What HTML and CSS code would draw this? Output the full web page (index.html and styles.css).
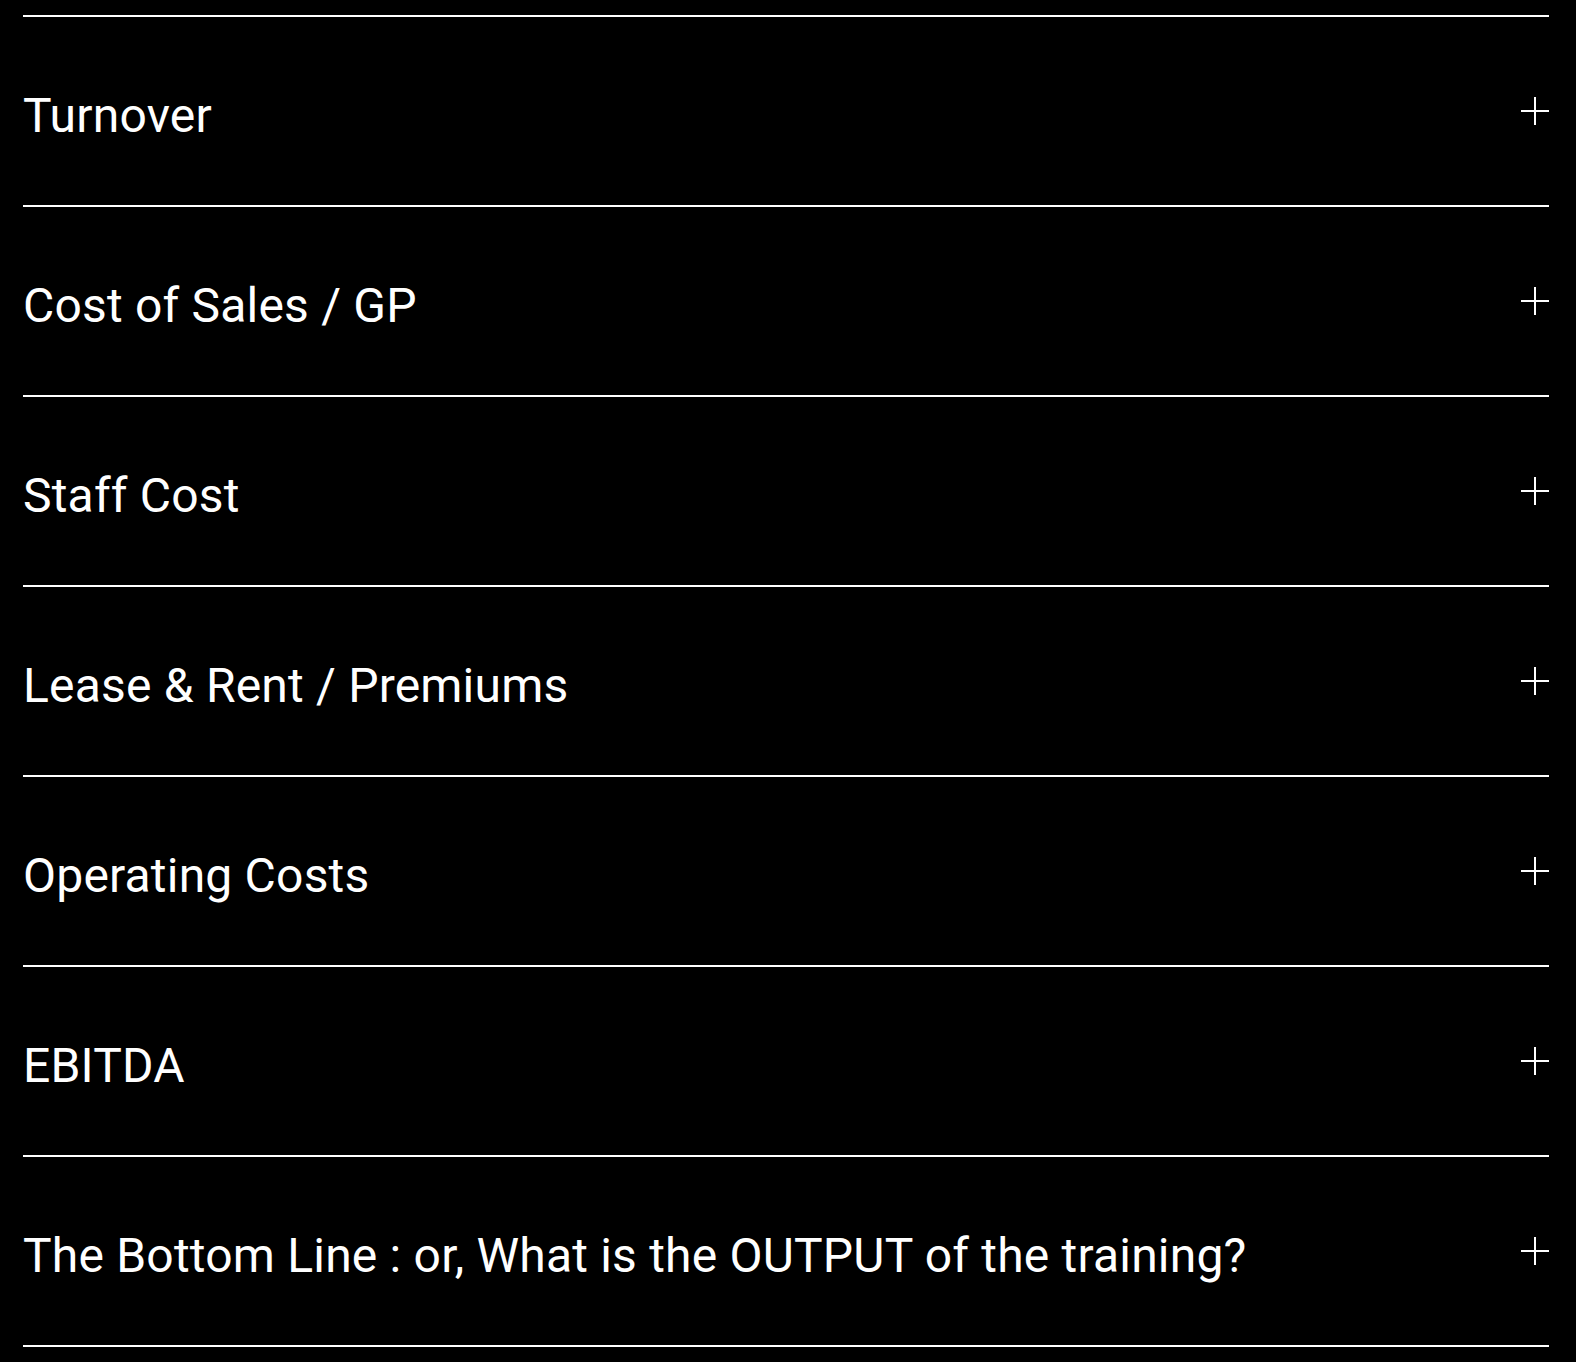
FILE: index.html
```html
<!DOCTYPE html>
<html lang="en">
<head>
<meta charset="utf-8">
<title>Accordion</title>
<link rel="stylesheet" href="styles.css">
</head>
<body>
<div class="accordion">
  <div class="item"><span class="label">Turnover</span><svg class="plus" width="28" height="28" viewBox="0 0 28 28"><path d="M0 14H28M14 0V28" stroke="#fff" stroke-width="2"/></svg></div>
  <div class="item"><span class="label">Cost of Sales / GP</span><svg class="plus" width="28" height="28" viewBox="0 0 28 28"><path d="M0 14H28M14 0V28" stroke="#fff" stroke-width="2"/></svg></div>
  <div class="item"><span class="label">Staff Cost</span><svg class="plus" width="28" height="28" viewBox="0 0 28 28"><path d="M0 14H28M14 0V28" stroke="#fff" stroke-width="2"/></svg></div>
  <div class="item"><span class="label">Lease &amp; Rent / Premiums</span><svg class="plus" width="28" height="28" viewBox="0 0 28 28"><path d="M0 14H28M14 0V28" stroke="#fff" stroke-width="2"/></svg></div>
  <div class="item"><span class="label">Operating Costs</span><svg class="plus" width="28" height="28" viewBox="0 0 28 28"><path d="M0 14H28M14 0V28" stroke="#fff" stroke-width="2"/></svg></div>
  <div class="item"><span class="label">EBITDA</span><svg class="plus" width="28" height="28" viewBox="0 0 28 28"><path d="M0 14H28M14 0V28" stroke="#fff" stroke-width="2"/></svg></div>
  <div class="item"><span class="label">The Bottom Line : or, What is the OUTPUT of the training?</span><svg class="plus" width="28" height="28" viewBox="0 0 28 28"><path d="M0 14H28M14 0V28" stroke="#fff" stroke-width="2"/></svg></div>
</div>
</body>
</html>
```

FILE: styles.css
```css
html, body {
  margin: 0;
  padding: 0;
  background: #000;
}
body {
  padding: 15px 27px 0 23px;
  color: #fff;
  font-family: Roboto, "Liberation Sans", sans-serif;
}
.accordion {
  border-bottom: 2px solid #fff;
}
.item {
  display: flex;
  align-items: center;
  justify-content: space-between;
  height: 188px;
  border-top: 2px solid #fff;
}
.label {
  font-size: 48px;
  line-height: 56px;
  letter-spacing: 0.2px;
  padding-top: 10px;
}
.plus {
  display: block;
  flex: none;
}
```
